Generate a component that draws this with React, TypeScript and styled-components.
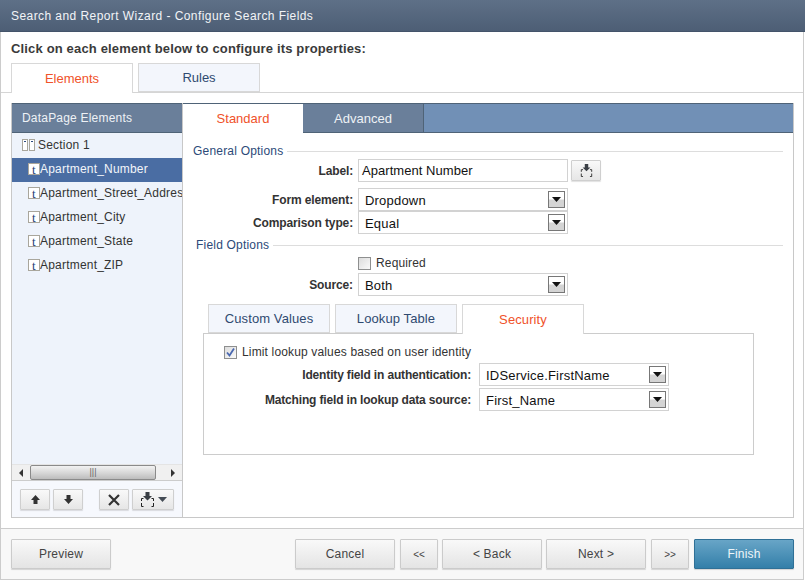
import React from 'react'
import styled, { createGlobalStyle } from 'styled-components'

const Global = createGlobalStyle`
  html, body { margin: 0; padding: 0; background: #fff; }
  body { font-family: "Liberation Sans", Arial, sans-serif; font-size: 12px; color: #333; }
  * { box-sizing: border-box; }
`

const Wizard = styled.div`
  width: 805px;
  height: 580px;
  display: flex;
  flex-direction: column;
  overflow: hidden;
`
const TitleBar = styled.div`
  height: 32px;
  flex: none;
  padding-left: 11px;
  display: flex;
  align-items: center;
  color: #f2f4f7;
  font-size: 12px;
  letter-spacing: 0.43px;
  background: linear-gradient(#5e7087, #4d5e75);
  border-bottom: 1px solid #44546a;
`
const Body = styled.div`
  width: 804px;
  flex: 1;
  display: flex;
  flex-direction: column;
  border-left: 1px solid #ccc;
  border-right: 1px solid #ccc;
  border-bottom: 1px solid #ccc;
  min-height: 0;
`
const Intro = styled.div`
  height: 31px;
  flex: none;
  padding: 9px 0 0 10px;
  font-size: 13px;
  font-weight: bold;
  color: #3a3a3a;
  letter-spacing: 0.16px;
`
const TopTabs = styled.div`
  height: 30px;
  flex: none;
  display: flex;
  gap: 5px;
  padding-left: 10px;
  border-bottom: 1px solid #d5d5d5;
`
const Tab = styled.div<{ $active?: boolean }>`
  width: 122px;
  height: ${p => (p.$active ? '30px' : '29px')};
  display: flex;
  align-items: center;
  justify-content: center;
  font-size: 13px;
  border: 1px solid #d8d8d8;
  border-bottom: ${p => (p.$active ? 'none' : '1px solid #d8d8d8')};
  background: ${p => (p.$active ? '#fff' : '#f3f6fc')};
  color: ${p => (p.$active ? '#f0522a' : '#2f4a70')};
`
const Panel = styled.div`
  height: 415px;
  flex: none;
  margin: 10px 9px 0 10px;
  display: flex;
  border: 1px solid #c8c8c8;
  border-top: none;
  border-left: none;
`
const Side = styled.div`
  width: 172px;
  flex: none;
  display: flex;
  flex-direction: column;
  border-left: 1px solid #c8c8c8;
  border-right: 1px solid #c8c8c8;
`
const SideHead = styled.div`
  height: 30px;
  flex: none;
  display: flex;
  align-items: center;
  padding-left: 10px;
  color: #eef2f6;
  letter-spacing: 0.2px;
  background: #6a7f9a;
  border-top: 1px solid #4f6377;
  border-bottom: 1px solid #4f6377;
`
const Tree = styled.div`
  flex: 1;
  background: #eef3fb;
  overflow: hidden;
`
const TreeRow = styled.div<{ $selected?: boolean }>`
  height: 24px;
  display: flex;
  align-items: center;
  padding: 0 0 2px 16px;
  white-space: nowrap;
  letter-spacing: 0.2px;
  color: ${p => (p.$selected ? '#f2f5fa' : '#333')};
  background: ${p => (p.$selected ? '#4a6da3' : 'transparent')};
`
const SectionRow = styled(TreeRow)`
  height: 25px;
  padding-left: 10px;
  gap: 3px;
`
const TypeIcon = styled.span`
  width: 12px;
  height: 12px;
  flex: none;
  display: flex;
  align-items: center;
  justify-content: center;
  font-family: "Liberation Serif", serif;
  font-size: 13px;
  line-height: 1;
  color: #1f3f78;
  background: #fff;
  border: 1px solid #a9a69c;
`
const ScrollBar = styled.div`
  height: 17px;
  flex: none;
  display: flex;
  align-items: center;
  padding: 0 7px 0 7px;
  background: #f0f0f0;
  border-top: 1px solid #e4e4e4;
  border-bottom: 1px solid #ccc;
`
const ScrollThumb = styled.div`
  width: 126px;
  height: 15px;
  margin: 0 auto 0 6px;
  display: flex;
  align-items: center;
  justify-content: center;
  border: 1px solid #8a8a8a;
  border-radius: 2px;
  background: linear-gradient(#f2f2f2, #d6d6d6 55%, #bcbcbc);
  color: #666;
  font-size: 9px;
  line-height: 1;
`
const SideTools = styled.div`
  flex: none;
  height: 36px;
  display: flex;
  align-items: flex-start;
  padding: 8px 0 0 8px;
  background: #f6f8fd;
`
const ToolButton = styled.button<{ $w?: number; $gap?: number }>`
  width: ${p => p.$w ?? 30}px;
  height: 21px;
  margin-right: ${p => p.$gap ?? 3}px;
  padding: 0;
  display: flex;
  align-items: center;
  justify-content: center;
  gap: 3px;
  border: 1px solid #cfcfcf;
  border-radius: 1px;
  background: linear-gradient(#f9f9f9, #e6e6e6);
  box-shadow: 0 1px 1px rgba(0, 0, 0, 0.12);
`
const Main = styled.div`
  flex: 1;
  min-width: 0;
  display: flex;
  flex-direction: column;
`
const MainTabs = styled.div`
  height: 30px;
  flex: none;
  display: flex;
  background: #7190b6;
  border-top: 1px solid #4f6377;
  border-bottom: 1px solid #4f6377;
`
const MainTab = styled.div<{ $active?: boolean }>`
  width: ${p => (p.$active ? 120 : 121)}px;
  display: flex;
  align-items: center;
  justify-content: center;
  font-size: 13px;
  color: ${p => (p.$active ? '#f0522a' : '#eef2f6')};
  background: ${p => (p.$active ? '#fff' : '#6a7f9a')};
  margin-bottom: ${p => (p.$active ? '-1px' : '0')};
  border-right: ${p => (p.$active ? 'none' : '1px solid #4f6377')};
`
const Legend = styled.div<{ $indent: number; $top: number }>`
  height: 14px;
  margin: ${p => p.$top}px 10px 0 ${p => p.$indent}px;
  display: flex;
  align-items: center;
  gap: 4px;
  color: #2c4a78;
  letter-spacing: 0.2px;
  &::after {
    content: '';
    flex: 1;
    height: 1px;
    background: #ddd;
  }
`
const Row = styled.div<{ $top: number }>`
  margin-top: ${p => p.$top}px;
  display: flex;
  align-items: center;
`
const Label = styled.div`
  width: 175px;
  flex: none;
  padding-right: 5px;
  text-align: right;
  font-weight: bold;
  letter-spacing: -0.13px;
  color: #333;
`
const TextField = styled.div<{ $w?: number }>`
  width: ${p => p.$w ?? 210}px;
  height: 23px;
  display: flex;
  align-items: center;
  padding-left: 3px;
  color: #111;
  font-size: 13px;
  letter-spacing: 0.05px;
  border: 1px solid #d2d2d2;
  background: #fff;
`
const SelectBox = styled(TextField)`
  justify-content: space-between;
  padding: 0 2px 0 6px;
  letter-spacing: 0.2px;
`
const SelectValue = styled.span`
  padding-top: 1px;
`
const SelectArrow = styled.span`
  width: 17px;
  height: 17px;
  display: flex;
  align-items: center;
  justify-content: center;
  border: 1px solid #777;
  background: linear-gradient(#fff 45%, #d4d4d4 55%);
`
const FieldButton = styled(ToolButton)`
  margin-left: 3px;
  margin-right: 0;
`
const Check = styled.span`
  width: 13px;
  height: 13px;
  flex: none;
  display: flex;
  align-items: center;
  justify-content: center;
  border: 1px solid #8e8f8f;
  background: linear-gradient(135deg, #dcdcdc, #fafafa);
`
const CheckText = styled.span`
  margin-left: 5px;
  letter-spacing: 0.15px;
  color: #333;
`
const CheckIndent = styled.div`
  width: 175px;
  flex: none;
`
const SubTabs = styled.div`
  margin: 8px 0 0 25px;
  height: 29px;
  display: flex;
  gap: 5px;
  position: relative;
  z-index: 1;
`
const SubTab = styled.div<{ $active?: boolean }>`
  width: 122px;
  height: ${p => (p.$active ? '30px' : '29px')};
  display: flex;
  align-items: center;
  justify-content: center;
  font-size: 13px;
  letter-spacing: 0.1px;
  border: 1px solid #d8d8d8;
  border-bottom: ${p => (p.$active ? 'none' : '1px solid #d8d8d8')};
  background: ${p => (p.$active ? '#fff' : '#f3f6fc')};
  color: ${p => (p.$active ? '#f0522a' : '#2f4a70')};
`
const SubPanel = styled.div`
  width: 551px;
  height: 122px;
  margin-left: 20px;
  padding: 11px 0 0 20px;
  border: 1px solid #ccc;
  background: #fff;
`
const SubRow = styled.div<{ $top: number }>`
  margin-top: ${p => p.$top}px;
  display: flex;
  align-items: center;
`
const SubLabel = styled.div`
  width: 247px;
  flex: none;
  text-align: right;
  font-weight: bold;
  letter-spacing: -0.16px;
  color: #333;
`
const SubSelect = styled(SelectBox)`
  margin-left: 8px;
`
const Footer = styled.div`
  flex: 1;
  margin-top: 10px;
  display: flex;
  align-items: flex-start;
  padding: 10px 9px 0 10px;
  background: #f8f8f8;
  border-top: 1px solid #ccc;
`
const FootButton = styled.button<{ $w?: number; $primary?: boolean; $gap?: number; $small?: boolean }>`
  width: ${p => p.$w ?? 100}px;
  height: 30px;
  flex: none;
  margin-left: ${p => p.$gap ?? 0}px;
  padding: 0;
  font-family: inherit;
  font-size: ${p => (p.$small ? 10 : 12)}px;
  letter-spacing: ${p => (p.$small ? 0 : 0.2)}px;
  border: 1px solid ${p => (p.$primary ? '#2f7096' : '#cbcbcb')};
  border-radius: 1px;
  color: ${p => (p.$primary ? '#eef5f9' : '#444')};
  background: ${p => (p.$primary ? 'linear-gradient(#68a5c7, #337fa9)' : 'linear-gradient(#f9f9f9, #e4e4e4)')};
  box-shadow: 0 1px 1px rgba(0, 0, 0, 0.15);
`
const FootSpacer = styled.div`
  flex: 1;
`

const Triangle = () => (
  <svg width="9" height="5" viewBox="0 0 9 5"><path d="M0 0h9L4.5 5z" fill="#111" /></svg>
)
const UpIcon = () => (
  <svg width="9" height="9" viewBox="0 0 9 9"><path d="M4.5 0L9 5H6.5v4h-4V5H0z" fill="#333" /></svg>
)
const DownIcon = () => (
  <svg width="9" height="9" viewBox="0 0 9 9"><path d="M2.5 0h4v4H9L4.5 9 0 4h2.5z" fill="#333" /></svg>
)
const CrossIcon = () => (
  <svg width="12" height="12" viewBox="0 0 12 12"><path d="M1 1l10 10M11 1L1 11" stroke="#333" strokeWidth="2.2" /></svg>
)
const InsertIcon = ({ size = 15 }: { size?: number }) => (
  <svg width={size} height={size} viewBox="0 0 15 15">
    <path d="M5.5 0h4v4H12L7.5 8.5 3 4h2.5z" fill="#3a3f45" />
    <path d="M3.5 6.5H1.5V9M1.5 11v3.5h2M11.5 6.5h2V9M13.5 11v3.5h-2" fill="none" stroke="#222" strokeWidth="1" />
  </svg>
)
const MenuCaret = () => (
  <svg width="9" height="5" viewBox="0 0 9 5"><path d="M0 0h9L4.5 5z" fill="#444c55" /></svg>
)
const SectionIcon = () => (
  <svg width="13" height="12" viewBox="0 0 13 12">
    <rect x="0.5" y="0.5" width="5" height="11" fill="#fff" stroke="#a9a69c" />
    <rect x="7.5" y="0.5" width="5" height="11" fill="#fff" stroke="#a9a69c" />
    <path d="M2 2.5h2M9 2.5h2" stroke="#2a4a80" />
  </svg>
)
const Tick = () => (
  <svg width="11" height="11" viewBox="0 0 11 11"><path d="M2 5.5l2.5 3L9 1.5" fill="none" stroke="#4a68b0" strokeWidth="1.8" /></svg>
)
const ScrollArrow = ({ left }: { left?: boolean }) => (
  <svg width="5" height="8" viewBox="0 0 5 8"><path d={left ? 'M4 0v8L0 4z' : 'M1 0v8l4-4z'} fill="#333" /></svg>
)

const fields = ['Apartment_Number', 'Apartment_Street_Address', 'Apartment_City', 'Apartment_State', 'Apartment_ZIP']

const SelectInner = ({ value }: { value: string }) => (
  <>
    <SelectValue>{value}</SelectValue>
    <SelectArrow><Triangle /></SelectArrow>
  </>
)

const App = () => {
  return (
    <Wizard>
      <Global />
      <TitleBar>Search and Report Wizard - Configure Search Fields</TitleBar>
      <Body>
        <Intro>Click on each element below to configure its properties:</Intro>
        <TopTabs>
          <Tab $active>Elements</Tab>
          <Tab>Rules</Tab>
        </TopTabs>
        <Panel>
          <Side>
            <SideHead>DataPage Elements</SideHead>
            <Tree>
              <SectionRow><SectionIcon />Section 1</SectionRow>
              {fields.map((f, i) => (
                <TreeRow key={f} $selected={i === 0}>
                  <TypeIcon>t</TypeIcon>{f}
                </TreeRow>
              ))}
            </Tree>
            <ScrollBar>
              <ScrollArrow left />
              <ScrollThumb>|||</ScrollThumb>
              <ScrollArrow />
            </ScrollBar>
            <SideTools>
              <ToolButton><UpIcon /></ToolButton>
              <ToolButton $gap={16}><DownIcon /></ToolButton>
              <ToolButton><CrossIcon /></ToolButton>
              <ToolButton $w={42}><InsertIcon /><MenuCaret /></ToolButton>
            </SideTools>
          </Side>
          <Main>
            <MainTabs>
              <MainTab $active>Standard</MainTab>
              <MainTab>Advanced</MainTab>
            </MainTabs>
            <Legend $indent={10} $top={11}>General Options</Legend>
            <Row $top={1}>
              <Label>Label:</Label>
              <TextField>Apartment Number</TextField>
              <FieldButton><InsertIcon size={13} /></FieldButton>
            </Row>
            <Row $top={6}>
              <Label>Form element:</Label>
              <SelectBox><SelectInner value="Dropdown" /></SelectBox>
            </Row>
            <Row $top={0}>
              <Label>Comparison type:</Label>
              <SelectBox><SelectInner value="Equal" /></SelectBox>
            </Row>
            <Legend $indent={13} $top={4}>Field Options</Legend>
            <Row $top={4}>
              <CheckIndent />
              <Check />
              <CheckText>Required</CheckText>
            </Row>
            <Row $top={3}>
              <Label>Source:</Label>
              <SelectBox><SelectInner value="Both" /></SelectBox>
            </Row>
            <SubTabs>
              <SubTab>Custom Values</SubTab>
              <SubTab>Lookup Table</SubTab>
              <SubTab $active>Security</SubTab>
            </SubTabs>
            <SubPanel>
              <SubRow $top={0}>
                <Check><Tick /></Check>
                <CheckText>Limit lookup values based on user identity</CheckText>
              </SubRow>
              <SubRow $top={4}>
                <SubLabel>Identity field in authentication:</SubLabel>
                <SubSelect $w={190}><SelectInner value="IDService.FirstName" /></SubSelect>
              </SubRow>
              <SubRow $top={2}>
                <SubLabel>Matching field in lookup data source:</SubLabel>
                <SubSelect $w={190}><SelectInner value="First_Name" /></SubSelect>
              </SubRow>
            </SubPanel>
          </Main>
        </Panel>
        <Footer>
          <FootButton>Preview</FootButton>
          <FootSpacer />
          <FootButton>Cancel</FootButton>
          <FootButton $w={38} $gap={5} $small>&lt;&lt;</FootButton>
          <FootButton $gap={4}>&lt; Back</FootButton>
          <FootButton $gap={4}>Next &gt;</FootButton>
          <FootButton $w={38} $gap={5} $small>&gt;&gt;</FootButton>
          <FootButton $primary $gap={5}>Finish</FootButton>
        </Footer>
      </Body>
    </Wizard>
  )
}

export default App
